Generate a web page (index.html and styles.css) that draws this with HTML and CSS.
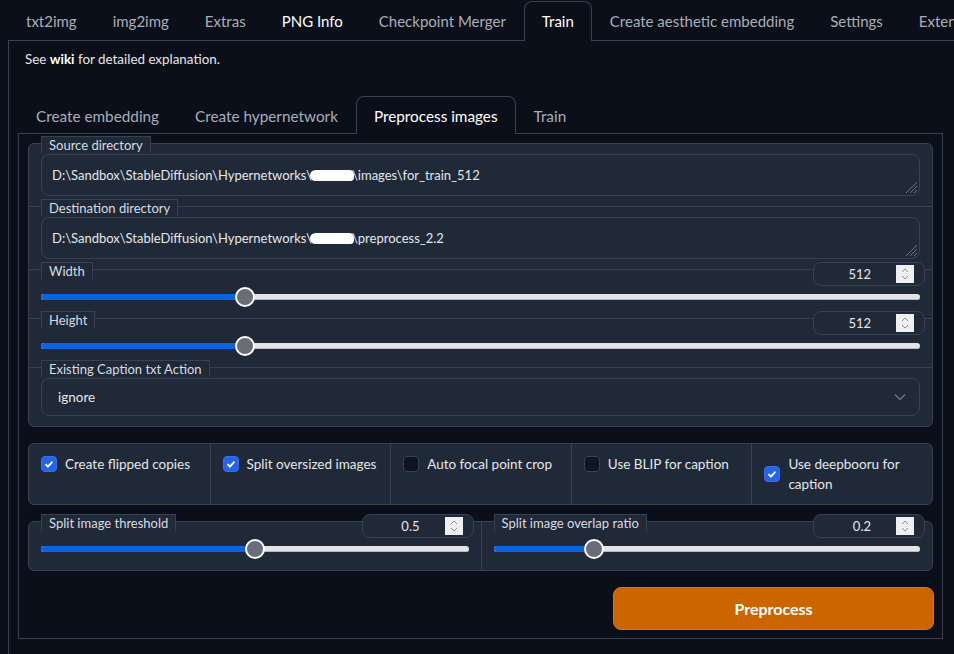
FILE: index.html
```html
<!DOCTYPE html>
<html>
<head>
<meta charset="utf-8">
<link rel="stylesheet" href="styles.css">
</head>
<body>
<div class="app">
  <div class="tabbar top">
    <div class="tab">txt2img</div>
    <div class="tab">img2img</div>
    <div class="tab">Extras</div>
    <div class="tab hover">PNG Info</div>
    <div class="tab">Checkpoint Merger</div>
    <div class="tab sel">Train</div>
    <div class="tab">Create aesthetic embedding</div>
    <div class="tab">Settings</div>
    <div class="tab">Extensions</div>
  </div>
  <div class="outer">
    <p class="intro">See <b>wiki</b> for detailed explanation.</p>
    <div class="subtabs">
      <div class="tabbar sub">
        <div class="tab">Create embedding</div>
        <div class="tab">Create hypernetwork</div>
        <div class="tab sel">Preprocess images</div>
        <div class="tab">Train</div>
      </div>
      <div class="inner">
        <div class="block">
          <div class="row">
            <span class="blabel">Source directory</span>
            <div class="textbox">D:\Sandbox\StableDiffusion\Hypernetworks\<span class="redact"></span>\images\for_train_512<svg class="grip" width="12" height="12" viewBox="0 0 12 12"><path d="M12 1L1 12M12 5L5 12M12 9L9 12" stroke="#6b7280" stroke-width="1"/></svg></div>
          </div>
          <div class="row">
            <span class="blabel">Destination directory</span>
            <div class="textbox">D:\Sandbox\StableDiffusion\Hypernetworks\<span class="redact"></span>\preprocess_2.2<svg class="grip" width="12" height="12" viewBox="0 0 12 12"><path d="M12 1L1 12M12 5L5 12M12 9L9 12" stroke="#6b7280" stroke-width="1"/></svg></div>
          </div>
          <div class="row srow">
            <span class="blabel">Width</span>
            <div class="num"><span class="val">512</span><svg class="spin" width="18" height="18" viewBox="0 0 18 18"><rect width="18" height="18" fill="#efeff1"/><path d="M6 7l3-3 3 3M6 11l3 3 3-3" fill="none" stroke="#8e8e96" stroke-width="1"/></svg></div>
            <div class="slider" style="--v:0.2258"><div class="track"><div class="fill"></div></div><div class="thumb"></div></div>
          </div>
          <div class="row srow">
            <span class="blabel">Height</span>
            <div class="num"><span class="val">512</span><svg class="spin" width="18" height="18" viewBox="0 0 18 18"><rect width="18" height="18" fill="#efeff1"/><path d="M6 7l3-3 3 3M6 11l3 3 3-3" fill="none" stroke="#8e8e96" stroke-width="1"/></svg></div>
            <div class="slider" style="--v:0.2258"><div class="track"><div class="fill"></div></div><div class="thumb"></div></div>
          </div>
          <div class="row">
            <span class="blabel">Existing Caption txt Action</span>
            <div class="dropdown"><span>ignore</span><svg width="12" height="8" viewBox="0 0 12 8"><path d="M1 1.5l5 5 5-5" fill="none" stroke="#6b7280" stroke-width="1.5"/></svg></div>
          </div>
        </div>

        <div class="block checks">
          <div class="check"><label class="ck"><span class="cb on"><svg width="16" height="16" viewBox="0 0 16 16"><path d="M4.5 8.2l2.4 2.4 4.6-5" fill="none" stroke="#fff" stroke-width="1.8"/></svg></span><span>Create flipped copies</span></label></div>
          <div class="check"><label class="ck"><span class="cb on"><svg width="16" height="16" viewBox="0 0 16 16"><path d="M4.5 8.2l2.4 2.4 4.6-5" fill="none" stroke="#fff" stroke-width="1.8"/></svg></span><span>Split oversized images</span></label></div>
          <div class="check"><label class="ck"><span class="cb"></span><span>Auto focal point crop</span></label></div>
          <div class="check"><label class="ck"><span class="cb"></span><span>Use BLIP for caption</span></label></div>
          <div class="check"><label class="ck"><span class="cb on"><svg width="16" height="16" viewBox="0 0 16 16"><path d="M4.5 8.2l2.4 2.4 4.6-5" fill="none" stroke="#fff" stroke-width="1.8"/></svg></span><span>Use deepbooru for caption</span></label></div>
        </div>

        <div class="block duo">
          <div class="row srow">
            <span class="blabel">Split image threshold</span>
            <div class="num"><span class="val">0.5</span><svg class="spin" width="18" height="18" viewBox="0 0 18 18"><rect width="18" height="18" fill="#efeff1"/><path d="M6 7l3-3 3 3M6 11l3 3 3-3" fill="none" stroke="#8e8e96" stroke-width="1"/></svg></div>
            <div class="slider" style="--v:0.5"><div class="track"><div class="fill"></div></div><div class="thumb"></div></div>
          </div>
          <div class="row srow">
            <span class="blabel">Split image overlap ratio</span>
            <div class="num"><span class="val">0.2</span><svg class="spin" width="18" height="18" viewBox="0 0 18 18"><rect width="18" height="18" fill="#efeff1"/><path d="M6 7l3-3 3 3M6 11l3 3 3-3" fill="none" stroke="#8e8e96" stroke-width="1"/></svg></div>
            <div class="slider" style="--v:0.2222"><div class="track"><div class="fill"></div></div><div class="thumb"></div></div>
          </div>
        </div>

        <div class="actions">
          <button class="primary">Preprocess</button>
        </div>
      </div>
    </div>
  </div>
</div>
</body>
</html>
```
FILE: styles.css
```css
html, body {
  margin: 0;
  background: #0b0f19;
  overflow: hidden;
}
body {
  font-family: "Lato", "Noto Sans", sans-serif;
  color: #e5e7eb;
}
.app {
  margin-left: 8px;
  padding-top: 1px;
  width: 960px;
}
.tabbar {
  display: flex;
  white-space: nowrap;
  border-bottom: 1px solid #374151;
}
.tab {
  flex: none;
  padding: 0 17px;
  border: 1px solid transparent;
  border-bottom: none;
  border-radius: 8px 8px 0 0;
  font-size: 15px;
  color: #a8aeb8;
}
.top .tab {
  height: 38px;
  line-height: 38px;
}
.sub .tab {
  height: 36px;
  line-height: 38px;
  font-size: 15.3px;
}
.tab.hover {
  color: #ffffff;
}
.tab.sel {
  border-color: #374151;
  margin-bottom: -1px;
  padding-bottom: 1px;
  background: #0b0f19;
  color: #ffffff;
}
.outer {
  border-left: 1px solid #374151;
  padding: 8px 0 0 9px;
  min-height: 700px;
}
.intro {
  margin: 0 0 27px;
  padding-left: 7px;
  font-size: 13.4px;
  line-height: 20px;
  color: #e5e7eb;
}
.intro b {
  color: #ffffff;
}
.subtabs {
  width: 925px;
}
.inner {
  border: 1px solid #374151;
  border-top: none;
  padding: 9px 9px 8px;
  display: flex;
  flex-direction: column;
  gap: 16px;
}
.block {
  background: #1f2937;
  border: 1px solid #374151;
  border-radius: 6px;
}
.row {
  position: relative;
  padding: 10px 12px;
}
.row + .row {
  border-top: 1px solid #374151;
}
.blabel {
  position: absolute;
  top: -8px;
  left: 12px;
  height: 16px;
  line-height: 16px;
  padding: 0 7px;
  border: 1px solid #374151;
  border-bottom: none;
  background: #1f2937;
  font-size: 13px;
  color: #d8dce2;
  white-space: nowrap;
}
.textbox {
  position: relative;
  height: 42px;
  box-sizing: border-box;
  border: 1px solid #374151;
  border-radius: 8px;
  padding: 0 10px;
  line-height: 40px;
  font-size: 13px;
  color: #e5e7eb;
  white-space: nowrap;
}
.redact {
  display: inline-block;
  width: 44px;
  height: 11px;
  margin: 0 -2px;
  vertical-align: -1px;
  background: #ffffff;
  border-radius: 6px 5px 4px 6px;
}
.grip {
  position: absolute;
  right: 2px;
  bottom: 2px;
}
.srow {
  padding: 17px 12px 11px;
}
.num {
  position: absolute;
  top: -8px;
  right: 7px;
  width: 112px;
  height: 24px;
  box-sizing: border-box;
  border: 1px solid #374151;
  border-radius: 8px;
  background: #1f2937;
  display: flex;
  align-items: center;
  padding-right: 10px;
}
.num .val {
  flex: 1;
  text-align: right;
  padding-right: 25px;
  font-size: 13px;
  color: #e5e7eb;
}
.spin {
  display: block;
}
.slider {
  position: relative;
  height: 20px;
}
.track {
  position: absolute;
  left: 0;
  right: 0;
  top: 7px;
  height: 6px;
  border-radius: 3px;
  background: #e4e4e8;
  box-shadow: inset 0 -1px 0 #b8b8c0;
}
.fill {
  height: 100%;
  width: calc(10px + var(--v) * (100% - 20px));
  border-radius: 3px;
  background: #0b63e3;
}
.thumb {
  position: absolute;
  top: 0;
  left: calc(var(--v) * (100% - 20px));
  width: 20px;
  height: 20px;
  box-sizing: border-box;
  border-radius: 50%;
  border: 2px solid #ffffff;
  background: #6b6c7a;
}
.dropdown {
  height: 38px;
  box-sizing: border-box;
  border: 1px solid #374151;
  border-radius: 8px;
  padding: 0 13px 0 16px;
  display: flex;
  align-items: center;
  justify-content: space-between;
  font-size: 13.5px;
  color: #e5e7eb;
}
.dropdown svg {
  display: block;
}
.checks {
  display: grid;
  grid-template-columns: repeat(5, 1fr);
}
.check {
  display: flex;
  align-items: flex-start;
  padding: 10px 6px 10px 12px;
}
.check + .check {
  border-left: 1px solid #374151;
}
.ck {
  display: flex;
  align-items: center;
  gap: 8px;
  font-size: 13.5px;
  line-height: 20px;
  color: #e5e7eb;
}
.check:last-child {
  padding-right: 12px;
}
.cb {
  flex: none;
  width: 16px;
  height: 16px;
  box-sizing: border-box;
  border-radius: 4px;
  border: 1px solid #374151;
  background: #0f1420;
}
.cb.on {
  background: #2563eb;
  border-color: #3b6fe8;
}
.cb svg {
  display: block;
  margin: -1px;
}
.duo {
  display: grid;
  grid-template-columns: 1fr 1fr;
}
.duo .row + .row {
  border-top: none;
  border-left: 1px solid #374151;
}
.actions {
  display: flex;
  justify-content: flex-end;
  margin-right: -1px;
}
.primary {
  width: 321px;
  height: 43px;
  border: 1px solid #e2760e;
  border-radius: 8px;
  background: #cc6400;
  color: #ffffff;
  font-family: inherit;
  font-size: 16px;
  font-weight: 700;
}
```
